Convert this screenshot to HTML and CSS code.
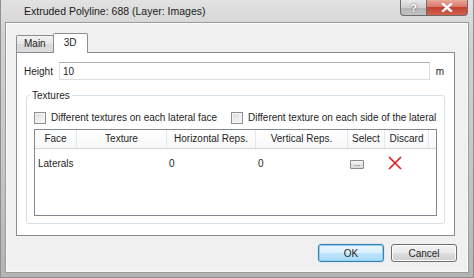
FILE: index.html
```html
<!DOCTYPE html>
<html lang="en">
<head>
    <meta charset="UTF-8">
    <meta name="viewport" content="width=device-width, initial-scale=1.0">
    <title>Extruded Polyline</title>
    <link rel="stylesheet" href="styles.css">
</head>
<body>
    <div class="window">
        <div class="titlebar">
            <span class="title">Extruded Polyline: 688 (Layer: Images)</span>
            <div class="caption-buttons">
                <div class="cap-btn cap-help">?</div>
                <div class="cap-btn cap-close">
                    <svg width="12" height="9" viewBox="0 0 12 9">
                        <path d="M2 1 L10 8 M10 1 L2 8" stroke="#fff" stroke-width="2.4" stroke-linecap="square"/>
                    </svg>
                </div>
            </div>
        </div>

        <div class="client">
            <div class="tabs">
                <div class="tab">Main</div>
                <div class="tab active">3D</div>
            </div>

            <div class="pane">
                <div class="height-row">
                    <label for="height">Height</label>
                    <input type="text" id="height" value="10">
                    <span class="unit">m</span>
                </div>

                <fieldset class="group">
                    <legend>Textures</legend>
                    <div class="checks">
                        <label class="check"><span class="box"></span>Different textures on each lateral face</label>
                        <label class="check"><span class="box"></span>Different texture on each side of the lateral</label>
                    </div>

                    <div class="grid">
                        <div class="grid-head">
                            <div class="col">Face</div>
                            <div class="col">Texture</div>
                            <div class="col">Horizontal Reps.</div>
                            <div class="col">Vertical Reps.</div>
                            <div class="col">Select</div>
                            <div class="col">Discard</div>
                            <div class="col filler"></div>
                        </div>
                        <div class="grid-row">
                            <div class="cell">Laterals</div>
                            <div class="cell"></div>
                            <div class="cell num">0</div>
                            <div class="cell num">0</div>
                            <div class="cell"><span class="dots">...</span></div>
                            <div class="cell">
                                <svg class="discard" width="14" height="14" viewBox="0 0 14 14">
                                    <path d="M1 1 L13 13 M13 1 L1 13" stroke="#e3151d" stroke-width="1.6"/>
                                </svg>
                            </div>
                            <div class="cell"></div>
                        </div>
                    </div>
                </fieldset>
            </div>

            <div class="actions">
                <button class="btn default">OK</button>
                <button class="btn">Cancel</button>
            </div>
        </div>
    </div>
</body>
</html>
```

FILE: styles.css
```css
:root {
    --client: #f0f0f0;
    --pane-border: #898c95;
    --group-border: #d5dfe5;
    --text: #1e1e1e;
}

* {
    margin: 0;
    padding: 0;
    box-sizing: border-box;
    font-family: 'Liberation Sans', Arial, sans-serif;
}

body {
    width: 474px;
    height: 278px;
    overflow: hidden;
    background: #8c8c8c;
}

.window {
    width: 474px;
    height: 278px;
    display: flex;
    flex-direction: column;
    padding: 0 5px 5px 5px;
    background: linear-gradient(to bottom, #e2e2e2 0%, #d2d2d2 12%, #c6c6c6 60%, #b4b4b4 100%);
    border: 1px solid #8f8f8f;
    border-top: none;
}

.titlebar {
    height: 23px;
    display: flex;
    align-items: flex-start;
    justify-content: space-between;
    margin: 0 -5px 0 -5px;
    padding: 0 5px 0 23px;
}

.title {
    font-size: 10.5px;
    color: #1a1a1a;
    line-height: 22px;
}

.caption-buttons {
    display: flex;
    height: 16px;
}

.cap-btn {
    display: flex;
    align-items: center;
    justify-content: center;
    height: 16px;
    border: 1px solid #6b6b6b;
    border-top: none;
}

.cap-help {
    width: 26px;
    border-radius: 0 0 0 4px;
    border-right: none;
    background: linear-gradient(to bottom, #e9e9e9 0%, #cfcfcf 50%, #b3b3b3 51%, #c4c4c4 100%);
    color: #fff;
    font-size: 11px;
    font-weight: bold;
    text-shadow: 0 0 2px #444;
}

.cap-close {
    width: 42px;
    border-radius: 0 0 4px 0;
    background: linear-gradient(to bottom, #e9a99c 0%, #d7786a 45%, #c2402f 50%, #d3614f 100%);
}

.client {
    flex: 1;
    display: flex;
    flex-direction: column;
    padding: 9px 10px 9px 9px;
    background: var(--client);
    border: 1px solid #fbfbfb;
    box-shadow: 0 0 0 1px #9a9a9a;
}

.tabs {
    display: flex;
    align-items: flex-end;
    height: 20px;
    margin-bottom: -1px;
    position: relative;
    z-index: 1;
}

.tab {
    height: 17px;
    margin-bottom: 1px;
    padding: 0 7px;
    font-size: 10px;
    line-height: 16px;
    color: var(--text);
    border: 1px solid var(--pane-border);
    border-bottom: none;
    border-radius: 2px 2px 0 0;
    background: linear-gradient(to bottom, #f3f3f3, #e5e5e5 50%, #d9d9d9 51%, #dcdcdc);
}

.tab.active {
    height: 20px;
    width: 35px;
    margin-left: -1px;
    margin-bottom: 0;
    text-align: center;
    line-height: 18px;
    background: #fff;
}

.pane {
    flex: 1;
    display: flex;
    flex-direction: column;
    margin-right: 2px;
    padding: 9px 9px 11px 7px;
    background: #fff;
    border: 1px solid var(--pane-border);
}

.height-row {
    display: flex;
    align-items: center;
    height: 18px;
    font-size: 10px;
    color: var(--text);
}

.height-row input {
    flex: 1;
    height: 18px;
    margin: 0 6px 0 6px;
    padding: 0 3px;
    font-size: 10px;
    color: var(--text);
    border: 1px solid #dcdfe3;
    border-top-color: #abadb3;
    outline: none;
}

.unit {
    margin-right: 1px;
}

.group {
    flex: 1;
    display: flex;
    flex-direction: column;
    margin: 10px 0 0 2px;
    padding: 10px 7px 7px 7px;
    border: 1px solid var(--group-border);
    border-radius: 3px;
    min-width: 0;
}

.group legend {
    margin-left: -4px;
    padding: 0 2px;
    font-size: 10px;
    color: var(--text);
}

.checks {
    display: flex;
    gap: 14px;
    height: 13px;
    align-items: center;
    font-size: 10px;
    color: var(--text);
}

.check {
    display: flex;
    align-items: center;
    gap: 5px;
    white-space: nowrap;
    flex-shrink: 0;
}

.box {
    width: 12px;
    height: 12px;
    border: 1px solid #8e8f8f;
    background: linear-gradient(135deg, #dcdcdc, #fbfbfb);
    box-shadow: inset 0 0 0 1px #f4f4f4;
}

.grid {
    flex: 1;
    display: flex;
    flex-direction: column;
    margin-top: 5px;
    border: 1px solid #828790;
    background: #fff;
}

.grid-head,
.grid-row {
    display: grid;
    grid-template-columns: 42px 90px 89px 92px 37px 44px 1fr;
}

.grid-head {
    height: 19px;
    border-bottom: 1px solid #d5d5d5;
    background: linear-gradient(to bottom, #ffffff, #f7f8f9);
}

.col {
    font-size: 10px;
    line-height: 18px;
    text-align: center;
    color: var(--text);
    border-right: 1px solid #e3e8ee;
}

.col.filler {
    border-right: none;
}

.grid-row {
    height: 28px;
    align-items: center;
}

.cell {
    font-size: 10px;
    color: var(--text);
    padding-left: 3px;
    display: flex;
    align-items: center;
}

.cell.num {
    padding-left: 2px;
}

.dots {
    display: inline-block;
    width: 14px;
    height: 9px;
    margin-left: -1px;
    margin-top: 2px;
    font-size: 8px;
    line-height: 5px;
    text-align: center;
    color: #333;
    border: 1px solid #8a8a8a;
    border-radius: 1px;
    background: linear-gradient(to bottom, #f6f6f6, #d8d8d8);
}

.discard {
    display: block;
}

.actions {
    display: flex;
    justify-content: flex-end;
    gap: 7px;
    margin-top: 8px;
}

.btn {
    width: 66px;
    height: 18px;
    font-size: 10px;
    color: var(--text);
    border: 1px solid #707070;
    border-radius: 3px;
    background: linear-gradient(to bottom, #f2f2f2 0%, #ebebeb 50%, #dddddd 51%, #cfcfcf 100%);
    box-shadow: inset 0 0 0 1px #fcfcfc;
}

.btn.default {
    border-color: #3c7fb1;
    background: linear-gradient(to bottom, #eaf6fd 0%, #d9f0fc 50%, #bee6fd 51%, #a7d9f5 100%);
    box-shadow: inset 0 0 0 1px #8ed0f2, 0 0 1px #48a6e0;
}
```
